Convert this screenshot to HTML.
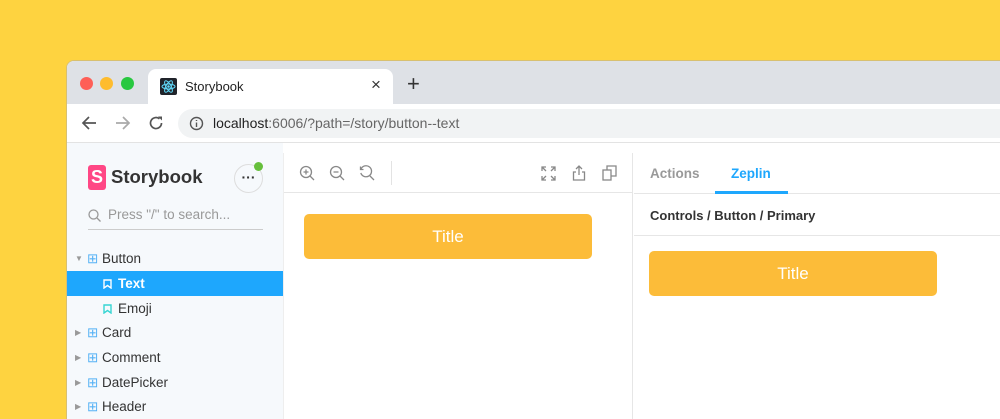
<!DOCTYPE html>
<html><head><style>
*{margin:0;padding:0;box-sizing:border-box}
html,body{width:1000px;height:419px;overflow:hidden}
body{background:#fed340;position:relative;font-family:"Liberation Sans",sans-serif}
.win{position:absolute;left:66px;top:60px;width:960px;height:370px;background:#fff;border-radius:8px;overflow:hidden;border:1px solid #d8c070}
.tabbar{position:absolute;left:0;top:0;right:0;height:43px;background:#dee1e6}
.dot{position:absolute;top:16px;width:13px;height:13px;border-radius:50%}
.tab{position:absolute;left:81px;top:8px;width:245px;height:36px;background:#fff;border-radius:8px 8px 0 0}
.addr{position:absolute;left:0;top:43px;right:0;height:39px;background:#fff;border-bottom:1px solid #e3e3e3}
.pill{position:absolute;left:111px;top:5px;right:0;height:29px;background:#f1f3f4;border-radius:15px}
.side{position:absolute;left:0;top:82px;width:216px;bottom:0;background:#f6f9fc}
.prev{position:absolute;left:216px;top:92px;width:350px;bottom:0;background:#fff;border-right:1px solid #e6e6e6;border-left:1px solid #eee}
.right{position:absolute;left:567px;top:92px;right:0;bottom:0;background:#fff}
.item{position:absolute;left:0;width:216px;height:25px;font-size:13.5px;color:#333;line-height:25px}
.btn{position:absolute;background:#fcbc39;border-radius:5px;color:#fff;font-size:17px;text-align:center}
</style></head><body>
<div class="win">
 <div class="tabbar">
  <div class="dot" style="left:13px;background:#fe5f57"></div>
  <div class="dot" style="left:33px;background:#febc2e"></div>
  <div class="dot" style="left:54px;background:#28c840"></div>
  <div class="tab">
   <div style="position:absolute;left:12px;top:9px;width:17px;height:17px;background:#20232a;border-radius:2px"><svg width="17" height="17" viewBox="0 0 17 17"><g fill="none" stroke="#61dafb" stroke-width="1"><ellipse cx="8.5" cy="8.5" rx="6.5" ry="2.5"/><ellipse cx="8.5" cy="8.5" rx="6.5" ry="2.5" transform="rotate(60 8.5 8.5)"/><ellipse cx="8.5" cy="8.5" rx="6.5" ry="2.5" transform="rotate(120 8.5 8.5)"/></g><circle cx="8.5" cy="8.5" r="1.3" fill="#61dafb"/></svg></div>
   <div style="position:absolute;left:37px;top:10px;font-size:13px;color:#222">Storybook</div>
   <div style="position:absolute;left:223px;top:6px;font-size:17px;color:#333">×</div>
  </div>
  <div style="position:absolute;left:340px;top:10px;font-size:22px;color:#333">+</div>
 </div>
 <div class="addr">
  <svg style="position:absolute;left:14px;top:11px" width="16" height="16" viewBox="0 0 16 16" fill="none" stroke="#555" stroke-width="1.7"><path d="M15 8H2M8 2L2 8l6 6"/></svg>
  <svg style="position:absolute;left:48px;top:11px" width="16" height="16" viewBox="0 0 16 16" fill="none" stroke="#aaa" stroke-width="1.7"><path d="M1 8h13M8 2l6 6-6 6"/></svg>
  <svg style="position:absolute;left:81px;top:11px" width="16" height="16" viewBox="0 0 16 16" fill="none" stroke="#555" stroke-width="1.7"><path d="M13.5 8A5.5 5.5 0 1 1 11.5 3.8"/><path d="M10 1.5h4v4z" fill="#555" stroke="none"/></svg>
  <div class="pill">
   <svg style="position:absolute;left:11px;top:7px" width="15" height="15" viewBox="0 0 15 15" fill="none" stroke="#555" stroke-width="1.4"><circle cx="7.5" cy="7.5" r="6"/><path d="M7.5 6.5v4.5M7.5 4v1"/></svg>
   <div style="position:absolute;left:35px;top:6px;font-size:14px;color:#222">localhost<span style="color:#666">:6006/?path=/story/button--text</span></div>
  </div>
 </div>
 <div class="side">
  <div style="position:absolute;left:21px;top:22px;width:18px;height:25px;background:#ff4785;border-radius:3px;color:#fff;font-weight:bold;font-size:18px;text-align:center;line-height:25px">S</div>
  <div style="position:absolute;left:44px;top:23px;font-size:18.5px;font-weight:bold;color:#333">Storybook</div>
  <div style="position:absolute;left:167px;top:21px;width:29px;height:29px;border:1px solid #ddd;border-radius:50%;background:#f6f9fc;text-align:center;line-height:24px;font-size:14px;color:#333;font-weight:bold">···</div>
  <div style="position:absolute;left:187px;top:19px;width:9px;height:9px;border-radius:50%;background:#66bf3c"></div>
  <svg style="position:absolute;left:21px;top:66px" width="13" height="13" viewBox="0 0 13 13" fill="none" stroke="#999" stroke-width="1.3"><circle cx="5.5" cy="5.5" r="4.5"/><path d="M9 9l3.5 3.5"/></svg>
  <div style="position:absolute;left:41px;top:64px;font-size:13.5px;color:#999">Press "/" to search...</div>
  <div style="position:absolute;left:21px;top:86px;width:175px;height:1px;background:#ccc"></div>
  <div class="item" style="top:103px"><span style="position:absolute;left:8px;font-size:8px;color:#999">▼</span><span style="position:absolute;left:20px;color:#58b3f5">⊞</span><span style="position:absolute;left:35px">Button</span></div>
  <div class="item" style="top:128px;background:#1ea7fd;color:#fff;font-weight:bold"><svg style="position:absolute;left:36px;top:8px" width="9" height="10" viewBox="0 0 9 10" fill="none" stroke="#fff" stroke-width="1.4"><path d="M1 1h7v8L4.5 6.5 1 9z"/></svg><span style="position:absolute;left:51px">Text</span></div>
  <div class="item" style="top:153px"><svg style="position:absolute;left:36px;top:8px" width="9" height="10" viewBox="0 0 9 10" fill="none" stroke="#37d5d3" stroke-width="1.4"><path d="M1 1h7v8L4.5 6.5 1 9z"/></svg><span style="position:absolute;left:51px">Emoji</span></div>
  <div class="item" style="top:177px"><span style="position:absolute;left:8px;font-size:8px;color:#999">▶</span><span style="position:absolute;left:20px;color:#58b3f5">⊞</span><span style="position:absolute;left:35px">Card</span></div>
  <div class="item" style="top:202px"><span style="position:absolute;left:8px;font-size:8px;color:#999">▶</span><span style="position:absolute;left:20px;color:#58b3f5">⊞</span><span style="position:absolute;left:35px">Comment</span></div>
  <div class="item" style="top:227px"><span style="position:absolute;left:8px;font-size:8px;color:#999">▶</span><span style="position:absolute;left:20px;color:#58b3f5">⊞</span><span style="position:absolute;left:35px">DatePicker</span></div>
  <div class="item" style="top:251px"><span style="position:absolute;left:8px;font-size:8px;color:#999">▶</span><span style="position:absolute;left:20px;color:#58b3f5">⊞</span><span style="position:absolute;left:35px">Header</span></div>
 </div>
 <div class="prev">
  <div style="position:absolute;left:0;top:0;right:0;height:40px;border-bottom:1px solid #e6e6e6">
   <svg style="position:absolute;left:15px;top:12px" width="16" height="16" viewBox="0 0 16 16" fill="none" stroke="#888" stroke-width="1.3"><circle cx="7" cy="7" r="5.5"/><path d="M11 11l4 4M7 4.5v5M4.5 7h5"/></svg>
   <svg style="position:absolute;left:45px;top:12px" width="16" height="16" viewBox="0 0 16 16" fill="none" stroke="#888" stroke-width="1.3"><circle cx="7" cy="7" r="5.5"/><path d="M11 11l4 4M4.5 7h5"/></svg>
   <svg style="position:absolute;left:75px;top:12px" width="16" height="16" viewBox="0 0 16 16" fill="none" stroke="#888" stroke-width="1.3"><path d="M2 4A5.5 5.5 0 1 1 1.8 8"/><path d="M11 11l4 4M1.5 1.5v3h3"/></svg>
   <div style="position:absolute;left:107px;top:8px;width:1px;height:24px;background:#e3e3e3"></div>
   <svg style="position:absolute;left:257px;top:13px" width="15" height="15" viewBox="0 0 15 15" fill="none" stroke="#888" stroke-width="1.3"><path d="M1 5V1h4M10 1h4v4M14 10v4h-4M5 14H1v-4M1 1l4 4M14 1l-4 4M14 14l-4-4M1 14l4-4"/></svg>
   <svg style="position:absolute;left:288px;top:12px" width="14" height="16" viewBox="0 0 14 16" fill="none" stroke="#888" stroke-width="1.3"><path d="M4 7H1.5v8h11V7H10M7 10V1M4 4l3-3 3 3"/></svg>
   <svg style="position:absolute;left:318px;top:12px" width="15" height="16" viewBox="0 0 15 16" fill="none" stroke="#888" stroke-width="1.3"><rect x="1" y="5" width="8" height="10"/><path d="M5 5V1h9v10H9"/></svg>
  </div>
  <div class="btn" style="left:20px;top:61px;width:288px;height:45px;line-height:45px">Title</div>
 </div>
 <div class="right">
  <div style="position:absolute;left:0;top:0;right:0;height:41px;border-bottom:1px solid #e6e6e6">
   <div style="position:absolute;left:16px;top:13px;font-size:13.5px;font-weight:bold;color:#999">Actions</div>
   <div style="position:absolute;left:97px;top:13px;font-size:13.5px;font-weight:bold;color:#1ea7fd">Zeplin</div>
   <div style="position:absolute;left:81px;top:38px;width:73px;height:3px;background:#1ea7fd"></div>
  </div>
  <div style="position:absolute;left:0;top:41px;right:0;height:42px;border-bottom:1px solid #e6e6e6">
   <div style="position:absolute;left:16px;top:14px;font-size:13px;font-weight:bold;color:#333">Controls / Button / Primary</div>
  </div>
  <div class="btn" style="left:15px;top:98px;width:288px;height:45px;line-height:45px">Title</div>
 </div>
</div>
</body></html>
